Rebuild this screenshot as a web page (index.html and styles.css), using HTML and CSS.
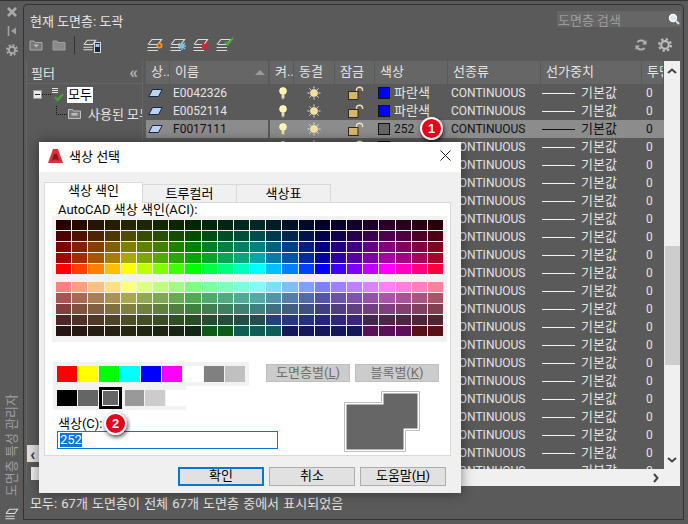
FILE: index.html
```html
<!DOCTYPE html>
<html lang="ko">
<head>
  <meta charset="UTF-8">
  <title>도면층 특성 관리자</title>
  <link rel="stylesheet" href="styles.css">
</head>
<body>
  <svg class="defs" width="0" height="0">
    <symbol id="stack" viewBox="0 0 16 16">
      <path d="M1 7.500 5 2.500H14.500L11 7.500H2M.5 10.500H11M.5 13.500H11" fill="none" stroke="#dcdcdc" stroke-width="1.200"/>
    </symbol>
    <symbol id="state" viewBox="0 0 15 8">
      <path d="M.8 7.500 4.500.5H14.200L10.500 7.500Z" fill="#bcd3f2" stroke="#14284f" stroke-width="1"/>
    </symbol>
    <symbol id="bulb" viewBox="0 0 8 13">
      <circle cx="4" cy="4" r="3.400" fill="#fff3a6" stroke="#fffbe0" stroke-width=".8"/>
      <path d="M2.600 7.500H5.400V11.500H2.600Z" fill="#e8e0b0"/>
      <path d="M3 12H5" stroke="#999"/>
    </symbol>
    <symbol id="sun" viewBox="0 0 14 14">
      <circle cx="7" cy="7" r="3.600" fill="#f6df9c" stroke="#fff2c8" stroke-width=".6"/>
      <path d="M7 .5V2.500M7 11.500V13.500M.5 7H2.500M11.500 7H13.500M2.400 2.400 3.800 3.800M10.200 10.200 11.600 11.600M2.400 11.600 3.800 10.200M10.200 3.800 11.600 2.400" stroke="#e8e8e8"/>
    </symbol>
    <symbol id="lock" viewBox="0 0 16 14">
      <path d="M8.500 6V3.500C8.500 .5 14.500 .5 14.500 3.500V5" fill="none" stroke="#f2e2b0" stroke-width="1.400"/>
      <rect x=".5" y="5.500" width="9.500" height="8" fill="#d8b56c" stroke="#2e2a20"/>
    </symbol>
  </svg>

  <div class="window">
    <div class="rail">
      <svg width="12" height="12" viewBox="0 0 12 12"><path d="M2 2 10 10M10 2 2 10" stroke="#a8a8a8" stroke-width="2.600"/></svg>
      <svg width="10" height="12" viewBox="0 0 10 12"><path d="M1.500 1V11" stroke="#a0a0a0" stroke-width="1.600"/><path d="M9 2.500V9.500L4 6Z" fill="#a0a0a0"/></svg>
      <svg width="12" height="12" viewBox="0 0 12 12"><circle cx="6" cy="6" r="3.200" fill="none" stroke="#a8a8a8" stroke-width="2"/><circle cx="6" cy="6" r="5" fill="none" stroke="#a8a8a8" stroke-width="2" stroke-dasharray="2 1.900"/></svg>
      <div class="rail-title">도면층 특성 관리자</div>
      <svg class="rail-layers" width="16" height="14"><use href="#stack"/></svg>
    </div>

    <div class="panel">
      <div class="head">
        <div class="current">현재 도면층: 도곽</div>
        <div class="search">
          <span>도면층 검색</span>
          <svg width="12" height="12" viewBox="0 0 12 12"><circle cx="5" cy="5" r="3.600" fill="#dfe6ee" stroke="#fff" stroke-width="1.200"/><path d="M8 8 11 11" stroke="#e4e4e4" stroke-width="2"/></svg>
        </div>
      </div>

      <div class="toolbar">
        <svg class="tool" width="14" height="12" viewBox="0 0 14 12"><path d="M1 2H5L6 3.500H13V11H1Z" fill="#777" stroke="#aaa"/><path d="M4.500 5.500H10L7.200 8.500Z" fill="#bbb"/></svg>
        <svg class="tool tool-gap" width="14" height="12" viewBox="0 0 14 12"><path d="M1 2H5L6 3.500H13V11H1Z" fill="#8a8a8a" stroke="#a0a0a0"/></svg>
        <div class="tool-sep"></div>
        <div class="tool-state">
          <svg width="14" height="16"><use href="#stack"/></svg>
          <svg class="tool-device" width="7" height="11" viewBox="0 0 7 11"><rect x=".5" y=".5" width="6" height="10" fill="#15233e" stroke="#d8d8d8"/><rect x="1.500" y="2" width="4" height="3" fill="#9cc4ea"/></svg>
        </div>
        <div class="tool-state tool-new">
          <svg width="16" height="16"><use href="#stack"/></svg>
          <svg class="tool-mark" width="7" height="7" viewBox="0 0 7 7"><circle cx="3.500" cy="3.500" r="3" fill="#e8a020"/><circle cx="3.500" cy="3.500" r="1.300" fill="#d83020"/></svg>
        </div>
        <div class="tool-state tool-next">
          <svg width="16" height="16"><use href="#stack"/></svg>
          <svg class="tool-mark" width="8" height="8" viewBox="0 0 8 8"><path d="M4 0V8M0 4H8M1 1 7 7M7 1 1 7" stroke="#7cc4e0" stroke-width="1.400"/></svg>
        </div>
        <div class="tool-state tool-next">
          <svg width="16" height="16"><use href="#stack"/></svg>
          <svg class="tool-mark" width="8" height="8" viewBox="0 0 8 8"><path d="M1 1 7 7M7 1 1 7" stroke="#f01830" stroke-width="2.200"/></svg>
        </div>
        <div class="tool-state tool-next">
          <svg width="16" height="16"><use href="#stack"/></svg>
          <svg class="tool-mark tool-check" width="10" height="9" viewBox="0 0 10 9"><path d="M1 5 3.600 7.600 9 1" fill="none" stroke="#3fae2a" stroke-width="2.200"/></svg>
        </div>
        <div class="tool-right">
          <svg width="12" height="12" viewBox="0 0 12 12"><path d="M10.500 5A4.600 4.600 0 0 0 2.400 3.200M1.500 7A4.600 4.600 0 0 0 9.600 8.800" fill="none" stroke="#b0b0b0" stroke-width="2"/><path d="M11.500 1V5.600H7ZM.5 11V6.400H5Z" fill="#b0b0b0"/></svg>
          <svg width="14" height="14" viewBox="0 0 14 14"><circle cx="7" cy="7" r="3.800" fill="none" stroke="#bcbcbc" stroke-width="2.200"/><circle cx="7" cy="7" r="6" fill="none" stroke="#bcbcbc" stroke-width="2" stroke-dasharray="2.400 2.300"/></svg>
        </div>
      </div>

      <div class="main">
        <div class="filters">
          <div class="filters-head"><span>필터</span><span class="collapse">«</span></div>
          <div class="tree">
            <div class="tree-row">
              <span class="tree-box"></span>
              <span class="tree-dots"></span>
              <svg class="tree-icon" width="13" height="15" viewBox="0 0 13 15"><path d="M1 1.500H7M1 3.500H7M1 5.500H7" stroke="#e4e4e4"/><path d="M4 10 6.500 13 12 7" fill="none" stroke="#45a22c" stroke-width="2.200"/></svg>
              <span class="tree-current">모두</span>
            </div>
            <div class="tree-row tree-child">
              <svg class="tree-link" width="12" height="14" viewBox="0 0 12 14"><path d="M.5 0V10.500H12" fill="none" stroke="#111" stroke-dasharray="1 1"/></svg>
              <svg class="tree-folder" width="13" height="11" viewBox="0 0 13 11"><path d="M.5 1.500H4.500L5.500 3H12.500V10.500H.5Z" fill="#777" stroke="#c0c0c0"/><path d="M3.500 5H9.500V7.500H3.500Z" fill="#bbb"/></svg>
              <span class="tree-label">사용된 모두</span>
            </div>
          </div>
          <div class="filters-scroll"><span class="scroll-left">‹</span></div>
          <div class="filters-check"><span class="check"></span></div>
        </div>

        <div class="grid">
          <div class="grid-body">
            <div class="rows">
              <div class="grid-head">
                <div>상..</div>
                <div class="head-name">이름<span class="sort"></span></div>
                <div>켜..</div>
                <div>동결</div>
                <div>잠금</div>
                <div>색상</div>
                <div>선종류</div>
                <div>선가중치</div>
                <div>투명</div>
              </div>
              <div id="rows"></div>
            </div>
            <div class="vscroll">
              <svg width="10" height="6" viewBox="0 0 10 6"><path d="M1 5 5 1.500 9 5" fill="none" stroke="#444" stroke-width="2"/></svg>
              <div class="thumb"></div>
              <svg class="vscroll-down" width="10" height="6" viewBox="0 0 10 6"><path d="M1 1 5 4.500 9 1" fill="none" stroke="#444" stroke-width="2"/></svg>
            </div>
          </div>
          <div class="hscroll">
            <svg width="6" height="10" viewBox="0 0 6 10"><path d="M1 1 4.500 5 1 9" fill="none" stroke="#444" stroke-width="2"/></svg>
          </div>
        </div>
      </div>

      <div class="status">모두: 67개 도면층이 전체 67개 도면층 중에서 표시되었음</div>
    </div>
  </div>

  <span class="badge badge-one">1</span>

  <!-- 색상 선택 대화상자 -->
  <div class="dialog">
    <div class="dialog-title">
      <svg width="15" height="14" viewBox="0 0 15 14"><path d="M5 0H10L15 14H0Z" fill="#d8333a"/><path d="M6 5H9L11 12 7.500 10 4 12Z" fill="#8e1216"/></svg>
      <span>색상 선택</span>
      <svg class="dialog-close" width="11" height="11" viewBox="0 0 11 11"><path d="M.5 .5 10.500 10.500M10.500 .5 .5 10.500" stroke="#222"/></svg>
    </div>
    <div class="dialog-body">
      <div class="tabs">
        <div class="tab tab-active">색상 색인</div>
        <div class="tab">트루컬러</div>
        <div class="tab">색상표</div>
      </div>
      <div class="tab-pane">
        <div class="aci-label">AutoCAD 색상 색인(ACI):</div>
        <div class="palette">
          <div class="swatches" id="aci-top"></div>
          <div class="swatches swatches-low" id="aci-bottom"></div>
        </div>
        <div class="lower">
          <div class="lower-left">
            <div class="standard">
              <i class="c-red"></i><i class="c-yellow"></i><i class="c-green"></i><i class="c-cyan"></i><i class="c-blue"></i><i class="c-magenta"></i><i class="c-white"></i><i class="c-gray"></i><i class="c-silver"></i>
            </div>
            <div class="grays">
              <i class="c-black"></i><i class="c-g251"></i><i class="c-g252"></i><i class="c-g253"></i><i class="c-g254"></i><i class="c-white"></i>
            </div>
            <label class="color-label">색상(C):</label>
            <div class="color-input"><span>252</span></div>
          </div>
          <div class="lower-right">
            <div class="by-buttons">
              <div class="by-button">도면층별(<u>L</u>)</div>
              <div class="by-button">블록별(<u>K</u>)</div>
            </div>
            <svg class="preview" width="76" height="61" viewBox="0 0 76 61"><path d="M1.500 12.500H38.500V1.500H74.500V38.500H60.500V59.500H1.500Z" fill="#666" stroke="#fff" stroke-width="2"/><path d="M.5 11.500H37.500V.5H75.500V39.500H61.500V60.500H.5Z" fill="none" stroke="#bbb"/></svg>
          </div>
        </div>
      </div>
      <div class="dialog-buttons">
        <div class="btn btn-default">확인</div>
        <div class="btn">취소</div>
        <div class="btn">도움말(<u>H</u>)</div>
      </div>
    </div>
    <span class="badge badge-two">2</span>
  </div>

  <script src="script.js"></script>
</body>
</html>
```

FILE: styles.css
```css
* {
  box-sizing: border-box;
}
html, body {
  margin: 0;
  height: 100%;
}
body {
  position: relative;
  width: 688px;
  height: 524px;
  overflow: hidden;
  background-color: #3c3c3c;
  font-family: Roboto, "Noto Sans CJK KR", sans-serif;
  font-size: 13px;
  color: #e4e4e4;
}
.defs {
  position: absolute;
}
.window {
  display: flex;
  height: 524px;
  background-color: #5a5a5a;
  border-top: 1px solid #333;
}

/* left rail */
.rail {
  display: flex;
  flex-direction: column;
  align-items: center;
  gap: 7px;
  width: 23px;
  padding-top: 5px;
  padding-bottom: 3px;
  flex-shrink: 0;
}
.rail-title {
  margin-top: auto;
  writing-mode: vertical-rl;
  text-orientation: sideways;
  transform: rotate(180deg);
  color: #9e9e9e;
  line-height: 13px;
}
.rail-layers {
  margin-top: 4px;
}

/* panel */
.panel {
  display: flex;
  flex-direction: column;
  flex: 1;
  margin: 3px 4px 4px 0;
  padding: 0 3px 0 2px;
  border: 1px solid #333;
  border-radius: 4px 4px 0 0;
}
.head {
  display: flex;
  justify-content: space-between;
  height: 22px;
  padding-top: 6px;
}
.current {
  align-self: flex-end;
  margin: 0 0 -3px 4px;
  line-height: 16px;
}
.search {
  display: flex;
  align-items: center;
  justify-content: space-between;
  width: 124px;
  height: 16px;
  margin-right: -1px;
  padding: 0 1px;
  background-color: #666;
  color: #9c9c9c;
}
.toolbar {
  display: flex;
  align-items: center;
  height: 18px;
  margin-top: 9px;
  padding-left: 3px;
}
.tool-gap {
  margin-left: 9px;
}
.tool-sep {
  width: 1px;
  height: 18px;
  margin: 0 8px;
  background-color: #333;
}
.tool-state {
  position: relative;
  display: flex;
  align-items: center;
  width: 15px;
  height: 16px;
}
.tool-state svg {
  flex-shrink: 0;
}
.tool-device {
  position: absolute;
  right: -3px;
  bottom: 0;
}
.tool-new {
  margin-left: 49px;
}
.tool-next {
  margin-left: 8px;
}
.tool-mark {
  position: absolute;
  right: -1px;
  top: 5px;
}
.tool-check {
  top: 0;
  right: -3px;
}
.tool-right {
  display: flex;
  align-items: center;
  gap: 11px;
  margin-left: auto;
  margin-right: 8px;
}

/* main area */
.main {
  display: flex;
  flex: 1;
  gap: 3px;
  margin-top: 7px;
  min-height: 0;
}
.filters {
  display: flex;
  flex-direction: column;
  width: 117px;
  border-right: 1px solid #666;
  border-left: 1px solid #666;
  flex-shrink: 0;
}
.filters-head {
  display: flex;
  align-items: center;
  justify-content: space-between;
  height: 23px;
  padding: 0 4px;
  border-bottom: 1px solid #666;
}
.collapse {
  color: #b4b4b4;
  font-size: 17px;
  font-weight: 700;
  line-height: 16px;
}
.tree {
  flex: 1;
  padding-top: 2px;
}
.tree-row {
  display: flex;
  align-items: center;
  height: 17px;
  padding-left: 6px;
}
.tree-box {
  position: relative;
  width: 9px;
  height: 9px;
  background-color: #e8e8e8;
  border: 1px solid #999;
}
.tree-box::after {
  content: "";
  position: absolute;
  left: 1px;
  right: 1px;
  top: 3px;
  border-top: 1px solid #224;
}
.tree-dots {
  width: 9px;
  border-top: 1px dotted #111;
}
.tree-current {
  margin-left: 3px;
  padding: 0 1px;
  background-color: #fff;
  color: #000;
  line-height: 16px;
}
.tree-child {
  position: relative;
  margin-top: 2px;
  padding-left: 41px;
  white-space: nowrap;
  overflow: hidden;
}
.tree-link {
  position: absolute;
  left: 29px;
  top: -1px;
}
.tree-folder {
  flex-shrink: 0;
}
.tree-label {
  margin-left: 7px;
}
.filters-scroll {
  display: flex;
  align-items: center;
  height: 17px;
  background-color: #e0e0e0;
}
.scroll-left {
  padding-left: 3px;
  color: #333;
  font-size: 17px;
  font-weight: 700;
  line-height: 14px;
}
.filters-check {
  height: 24px;
  padding: 5px 0 0 4px;
}
.check {
  display: block;
  width: 13px;
  height: 13px;
  background-color: #eee;
}

/* layer grid */
.grid {
  display: flex;
  flex-direction: column;
  flex: 1;
  min-width: 0;
}
.grid-body {
  display: flex;
  flex: 1;
  min-height: 0;
}
.rows {
  flex: 1;
  min-width: 0;
  overflow: hidden;
}
.grid-head,
.row {
  display: grid;
  grid-template-columns: 24px 100px 24px 41px 40px 73px 93px 101px 22px;
}
.grid-head {
  height: 23px;
  background-color: #5a5a5a;
}
.grid-head div {
  position: relative;
  margin-right: 1px;
  padding-left: 5px;
  background-color: #666;
  line-height: 22px;
  white-space: nowrap;
  overflow: hidden;
}
.head-name {
  margin-right: 2px !important;
}
.sort {
  position: absolute;
  right: 3px;
  top: 9px;
  border-left: 5px solid transparent;
  border-right: 5px solid transparent;
  border-bottom: 5px solid #999;
}
.row {
  height: 18px;
  line-height: 18px;
  white-space: nowrap;
}
.row > div {
  display: flex;
  align-items: center;
  overflow: hidden;
}
.row .name {
  margin-right: 2px;
  padding-left: 3px;
  font-size: 12px;
}
.row .state {
  padding-left: 2px;
}
.row .on {
  padding-left: 9px;
}
.row .freeze {
  padding-left: 13px;
}
.row .lock {
  padding-left: 13px;
}
.row .color {
  gap: 4px;
  padding-left: 3px;
}
.row .linetype {
  padding-left: 3px;
  font-size: 12px;
}
.row .weight {
  padding-left: 1px;
}
.row .alpha {
  padding-left: 4px;
  font-size: 12px;
}
.row.selected {
  color: #111;
}
.row.selected > div {
  background-color: #8c8c8c;
}
.row.selected .color {
  font-size: 12px;
}
.color-box {
  width: 12px;
  height: 12px;
  border: 1px solid #111;
}
.weight-line {
  width: 33px;
  margin-right: 6px;
  border-top: 1px solid #f4f4f4;
}
.selected .weight-line {
  border-top-color: #111;
}
.vscroll {
  display: flex;
  flex-direction: column;
  align-items: center;
  width: 16px;
  padding-top: 7px;
  padding-bottom: 6px;
  background-color: #f0f0f0;
  flex-shrink: 0;
}
.thumb {
  width: 15px;
  height: 119px;
  margin: 172px 0 0 1px;
  background-color: #cdcdcd;
}
.vscroll-down {
  margin-top: auto;
}
.hscroll {
  display: flex;
  align-items: center;
  justify-content: flex-end;
  height: 17px;
  padding-right: 21px;
  background-color: #f0f0f0;
}
.status {
  height: 33px;
  padding-left: 4px;
  word-spacing: 1px;
  line-height: 36px;
}

/* dialog */
.dialog {
  position: absolute;
  left: 39px;
  top: 142px;
  display: flex;
  flex-direction: column;
  width: 422px;
  height: 351px;
  background-color: #f0f0f0;
  color: #000;
  box-shadow: 0 0 12px rgba(0, 0, 0, 0.45);
}
.dialog-title {
  display: flex;
  align-items: center;
  gap: 6px;
  height: 30px;
  padding: 0 10px 3px 9px;
  background-color: #fff;
}
.dialog-close {
  margin-left: auto;
}
.dialog-body {
  display: flex;
  flex-direction: column;
  flex: 1;
  padding: 9px 10px 0 5px;
}
.tabs {
  display: flex;
  align-items: flex-end;
  height: 21px;
}
.tab {
  width: 94px;
  height: 19px;
  margin-bottom: -1px;
  border: 1px solid #d9d9d9;
  border-left: 0;
  background-color: #f0f0f0;
  text-align: center;
  line-height: 17px;
}
.tab-active {
  position: relative;
  width: 99px;
  height: 21px;
  border-left: 1px solid #d9d9d9;
  border-bottom: 0;
  background-color: #fff;
  line-height: 16px;
}
.tab-pane {
  height: 254px;
  padding: 0 3px 0 7px;
  background-color: #fff;
  border: 1px solid #d9d9d9;
}
.aci-label {
  height: 13px;
  padding-left: 6px;
  line-height: 13px;
}
.palette {
  height: 126px;
  padding: 4px;
  background-color: #f2f2f2;
}
.swatches {
  display: grid;
  grid-template-columns: repeat(24, 1fr);
  grid-auto-rows: 10px;
  gap: 1px;
}
.swatches-low {
  margin-top: 8px;
}
.lower {
  display: flex;
}
.lower-left {
  width: 225px;
  margin: 20px 0 0 1px;
  flex-shrink: 0;
}
.standard,
.grays {
  display: flex;
  align-items: center;
  gap: 1px;
  width: 196px;
  height: 24px;
  padding-left: 4px;
  background-color: #f2f2f2;
}
.grays {
  width: 133px;
}
.standard i,
.grays i {
  display: block;
  width: 20px;
  height: 16px;
}
.grays .c-g252 {
  width: 23px;
  height: 22px;
  margin: 0 2px 0 0;
  border: 3px solid #000;
  outline: 1px solid #fff;
  outline-offset: -4px;
}
.c-red { background-color: #f00; }
.c-yellow { background-color: #ff0; }
.c-green { background-color: #0f0; }
.c-cyan { background-color: #0ff; }
.c-blue { background-color: #00f; }
.c-magenta { background-color: #f0f; }
.c-white { background-color: #fff; }
.c-gray { background-color: #808080; }
.c-silver { background-color: #c0c0c0; }
.c-black { background-color: #000; }
.c-g251 { background-color: #656565; }
.c-g252 { background-color: #666; }
.c-g253 { background-color: #999; }
.c-g254 { background-color: #ccc; }
.color-label {
  display: block;
  height: 15px;
  margin: 6px 0 0 5px;
  line-height: 15px;
}
.color-input {
  width: 221px;
  height: 18px;
  margin: 0 0 0 4px;
  padding: 1px 2px;
  background-color: #fff;
  border: 1px solid #0078d7;
  line-height: 14px;
}
.color-input span {
  display: inline-block;
  height: 14px;
  background-color: #0078d7;
  color: #fff;
}
.lower-right {
  flex: 1;
  padding: 22px 0 0 0;
}
.by-buttons {
  display: flex;
  gap: 5px;
  margin-left: -12px;
}
.by-button {
  width: 84px;
  height: 18px;
  background-color: #ccc;
  border: 1px solid #bfbfbf;
  color: #6d6d6d;
  text-align: center;
  line-height: 15px;
}
.preview {
  display: block;
  margin: 9px 0 0 66px;
}
.dialog-buttons {
  display: flex;
  justify-content: flex-end;
  gap: 5px;
  margin-top: 11px;
  margin-right: 5px;
}
.btn {
  width: 86px;
  height: 19px;
  background-color: #e1e1e1;
  border: 1px solid #adadad;
  text-align: center;
  line-height: 16px;
}
.btn-default {
  border: 2px solid #0078d7;
  line-height: 14px;
}

/* badges */
.badge {
  position: absolute;
  width: 23px;
  height: 23px;
  background-color: #e8001c;
  border: 2px solid #fff;
  border-radius: 50%;
  box-shadow: 1px 2px 4px rgba(0, 0, 0, 0.7);
  color: #fff;
  font-family: "Liberation Sans", sans-serif;
  font-size: 13px;
  font-weight: 700;
  text-align: center;
  line-height: 19px;
}
.badge-one {
  left: 420px;
  top: 117px;
}
.badge-two {
  left: 65px;
  top: 270px;
}
```

FILE: script.js
```js
// ACI palette: 24 hues, each row a saturation / value pair
function hsv(h, s, v) {
  const f = n => {
    const k = (n + h / 60) % 6;
    return Math.round(255 * v * (1 - s * Math.max(0, Math.min(k, 4 - k, 1))));
  };
  return `rgb(${f(5)},${f(3)},${f(1)})`;
}

function fillSwatches(id, rows, overrides) {
  const box = document.getElementById(id);
  rows.forEach(([s, v], r) => {
    for (let c = 0; c < 24; c++) {
      const cell = document.createElement('div');
      const key = r + ':' + c;
      cell.style.backgroundColor = overrides[key] || hsv(c * 15, s, v);
      box.appendChild(cell);
    }
  });
}

fillSwatches('aci-top', [[1, 0.15], [1, 0.3], [1, 0.5], [1, 0.66], [1, 1]], {});

const odd = {
  '3:13': '#25407f', '3:14': '#25387f', '3:15': '#25307f',
  '3:16': '#25257f', '3:17': '#30257f', '3:18': '#3a257f'
};
for (let c = 9; c < 24; c++) {
  if (c < 11) odd['4:' + c] = '#105a18';
  else if (c < 14) odd['4:' + c] = '#105a58';
  else if (c < 19) odd['4:' + c] = '#12185a';
  else if (c < 22) odd['4:' + c] = '#5a1058';
  else odd['4:' + c] = '#5a1018';
}
fillSwatches('aci-bottom', [[0.5, 1], [0.5, 0.66], [0.5, 0.5], [0.5, 0.3], [0.5, 0.15]], odd);

// layer rows, the ones behind the dialog only show their right hand columns
const layers = [
  { name: 'E0042326', color: '#0000ff', label: '파란색' },
  { name: 'E0052114', color: '#0000ff', label: '파란색' },
  { name: 'F0017111', color: '#666666', label: '252', selected: true }
];
while (layers.length < 22) {
  layers.push({ name: '', color: '#1a1a1a', label: '' });
}

const use = (id, w, h) => `<svg width="${w}" height="${h}"><use href="#${id}"/></svg>`;

document.getElementById('rows').innerHTML = layers.map(l => `
  <div class="row${l.selected ? ' selected' : ''}">
    <div class="state">${use('state', 15, 8)}</div>
    <div class="name">${l.name}</div>
    <div class="on">${use('bulb', 8, 13)}</div>
    <div class="freeze">${use('sun', 14, 14)}</div>
    <div class="lock">${use('lock', 16, 14)}</div>
    <div class="color"><span class="color-box" style="background-color:${l.color}"></span>${l.label}</div>
    <div class="linetype">CONTINUOUS</div>
    <div class="weight"><span class="weight-line"></span>기본값</div>
    <div class="alpha">0</div>
  </div>`).join('');
```
